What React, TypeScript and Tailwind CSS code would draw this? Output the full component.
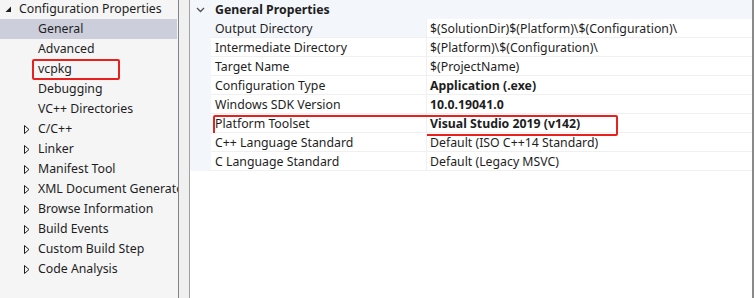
import React from "react";

const font = { fontFamily: '"Noto Sans", "Open Sans", sans-serif' };

function Expanded() {
  return (
    <svg width="7" height="7" viewBox="0 0 7 7" className="shrink-0">
      <polygon points="6,0.5 6,6 0.5,6" fill="#1e1e1e" />
    </svg>
  );
}

function Collapsed() {
  return (
    <svg width="6" height="9" viewBox="0 0 6 9" className="shrink-0">
      <polygon points="0.5,0.5 5,4.5 0.5,8.5" fill="none" stroke="#1e1e1e" strokeWidth="1" />
    </svg>
  );
}

const leafs = ["General", "Advanced", "vcpkg", "Debugging", "VC++ Directories"];
const groups = [
  "C/C++",
  "Linker",
  "Manifest Tool",
  "XML Document Generator",
  "Browse Information",
  "Build Events",
  "Custom Build Step",
  "Code Analysis",
];

const rows: { name: string; value: string; bold?: boolean; red?: boolean; focus?: boolean }[] = [
  { name: "Output Directory", value: "$(SolutionDir)$(Platform)\\$(Configuration)\\", focus: true },
  { name: "Intermediate Directory", value: "$(Platform)\\$(Configuration)\\" },
  { name: "Target Name", value: "$(ProjectName)" },
  { name: "Configuration Type", value: "Application (.exe)", bold: true },
  { name: "Windows SDK Version", value: "10.0.19041.0", bold: true },
  { name: "Platform Toolset", value: "Visual Studio 2019 (v142)", bold: true, red: true },
  { name: "C++ Language Standard", value: "Default (ISO C++14 Standard)" },
  { name: "C Language Standard", value: "Default (Legacy MSVC)" },
];

export default function App() {
  return (
    <div
      className="flex w-[755px] h-[298px] bg-white text-[12.3px] text-[#1e1e1e] overflow-hidden"
      style={font}
    >
      {/* Left tree */}
      <div className="w-[179px] shrink-0 pr-px bg-[#f5f5f5] border-r border-[#7f848c] flex flex-col overflow-hidden">
        <div className="h-[20px] -mt-px pt-px flex items-center pl-[5px] gap-[7px] whitespace-nowrap">
          <Expanded />
          <span className="leading-none">Configuration Properties</span>
        </div>
        {leafs.map((l, i) => (
          <div
            key={l}
            className={
              "h-[20px] pt-px flex items-center pl-[38px] whitespace-nowrap relative " +
              (i === 0 ? "bg-[#cccedb]" : "")
            }
          >
            <span className="leading-none">{l}</span>
            {l === "vcpkg" && (
              <div className="absolute left-[32px] top-[0px] w-[88px] h-[21px] border-2 border-[#e8201e] rounded-[2px]" />
            )}
          </div>
        ))}
        {groups.map((g) => (
          <div key={g} className="h-[20px] pt-px flex items-center pl-[24px] gap-[8px] whitespace-nowrap">
            <Collapsed />
            <span className="leading-none">{g}</span>
          </div>
        ))}
      </div>

      {/* Splitter */}
      <div className="w-[11px] shrink-0 bg-[#f0f0f0] border-r border-[#a0a0a0]" />

      {/* Property grid */}
      <div className="flex-1 flex flex-col border-r-2 border-[#8a8a8a] mr-[1px]">
        <div className="h-[19px] pt-px bg-[#f3f6fb] flex items-center whitespace-nowrap">
          <div className="w-[21px] flex justify-center">
            <svg width="9" height="6" viewBox="0 0 9 6">
              <polyline points="1,1 4.5,4.5 8,1" fill="none" stroke="#555" strokeWidth="1.4" />
            </svg>
          </div>
          <span className="font-bold leading-none pl-[4px]">General Properties</span>
        </div>
        {rows.map((r) => (
          <div key={r.name} className="h-[19px] flex whitespace-nowrap relative">
            <div className="w-[21px] bg-[#f3f6fb]" />
            <div
              className={
                "w-[215px] pt-[2px] flex items-center pl-[4px] border-b border-[#f0f0f0] " +
                (r.focus ? "bg-[#f3f6fb]" : "bg-white")
              }
            >
              <span className="leading-none">{r.name}</span>
            </div>
            <div className="flex-1 pt-[2px] flex items-center pl-[3px] border-l border-[#f0f0f0] border-b">
              <span className={"leading-none " + (r.bold ? "font-bold" : "")}>{r.value}</span>
            </div>
            {r.red && (
              <div className="absolute left-[23px] top-[1px] w-[405px] h-[21px] border-2 border-[#e8201e] rounded-[2px]" />
            )}
          </div>
        ))}
        <div className="flex-1" />
      </div>
    </div>
  );
}
